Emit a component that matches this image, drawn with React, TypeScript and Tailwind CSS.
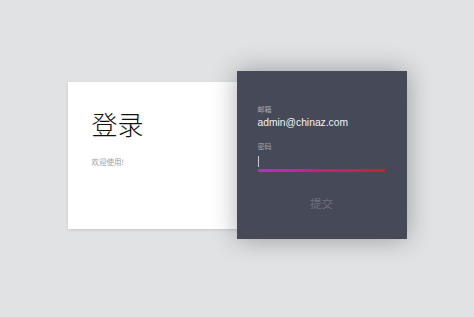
const cjk = { fontFamily: '"Noto Sans CJK SC", "Noto Sans", sans-serif' };

const App = () => {
  return (
    <div className="flex h-[317px] w-[474px] items-start justify-center bg-[#e1e2e4] pt-[71px]">
      <div className="flex items-center">
        {/* left panel */}
        <div className="h-[147px] w-[169px] bg-white pl-[24px] pt-[27px] shadow-[0_1px_3px_rgba(0,0,0,0.12)]">
          <h1
            className="text-[26px] leading-[30px] font-light text-[#111]"
            style={cjk}
          >
            登录
          </h1>
          <p
            className="mt-[18px] text-[7.5px] leading-[10px] text-[#9c9c9c]"
            style={cjk}
          >
            欢迎使用!
          </p>
        </div>

        {/* right panel */}
        <div className="relative z-10 h-[168px] w-[170px] bg-[#464957] pl-[21px] pt-[33px] shadow-[0_0_24px_rgba(0,0,0,0.32)]">
          <label
            className="block text-[7px] leading-[10px] text-[#a9abb6]"
            style={cjk}
          >
            邮箱
          </label>
          <div className="mt-[2px] text-[10.3px] leading-[14px] text-[#f2f2f4] [font-family:'Liberation_Sans',Arial,sans-serif]">
            admin@chinaz.com
          </div>
          <label
            className="mt-[11px] block text-[7px] leading-[10px] text-[#a9abb6]"
            style={cjk}
          >
            密码
          </label>
          <div className="h-[18px] pt-[5px]">
            <div className="h-[11px] w-px bg-[#c9cad2]" />
          </div>
          <div className="h-[3px] w-[127px] bg-gradient-to-r from-[#b52cc8] via-[#c41f74] to-[#c42030]" />
          <div className="-ml-[21px] mt-[18px] text-center">
            <button
              className="text-[11.5px] leading-[14px] text-[#6d707e]"
              style={cjk}
            >
              提交
            </button>
          </div>
        </div>
      </div>
    </div>
  );
};

export default App;
